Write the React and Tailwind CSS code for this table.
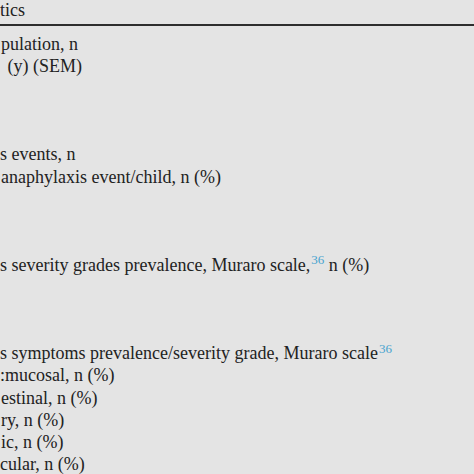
const rows = [
  { text: "pulation, n", pl: "pl-px" },
  { text: " (y) (SEM)", pl: "pl-[3px]" },
  null,
  null,
  null,
  { text: "s events, n", pl: "pl-0" },
  { text: "anaphylaxis event/child, n (%)", pl: "pl-px" },
  null,
  null,
  null,
  { text: "s severity grades prevalence, Muraro scale,", sup: "36", after: " n (%)", pl: "pl-0" },
  null,
  null,
  null,
  { text: "s symptoms prevalence/severity grade, Muraro scale", sup: "36", pl: "pl-0" },
  { text: ":mucosal, n (%)", pl: "pl-0" },
  { text: "estinal, n (%)", pl: "pl-px" },
  { text: "ry, n (%)", pl: "pl-px" },
  { text: "ic, n (%)", pl: "pl-px" },
  { text: "cular, n (%)", pl: "pl-0" },
];

export default function App() {
  return (
    <div
      className="h-[474px] w-[474px] overflow-hidden bg-[#e4e4e4] text-[#222222]"
      style={{ fontFamily: '"Liberation Serif", serif' }}
    >
      <div className="flex h-[26px] items-center border-b-2 border-[#2e2e2e] text-[18px] leading-none">
        <span className="-mt-[4px]">tics</span>
      </div>
      <div className="pt-[7px] text-[18px] leading-[22.1px]">
        {rows.map((r, i) =>
          r ? (
            <div key={i} className={`h-[22.1px] whitespace-pre ${r.pl}`}>
              {r.text}
              {r.sup && <sup className="ml-px text-[13px] text-[#47a3cf]">{r.sup}</sup>}
              {r.after}
            </div>
          ) : (
            <div key={i} className="h-[22.1px]" />
          )
        )}
      </div>
    </div>
  );
}
